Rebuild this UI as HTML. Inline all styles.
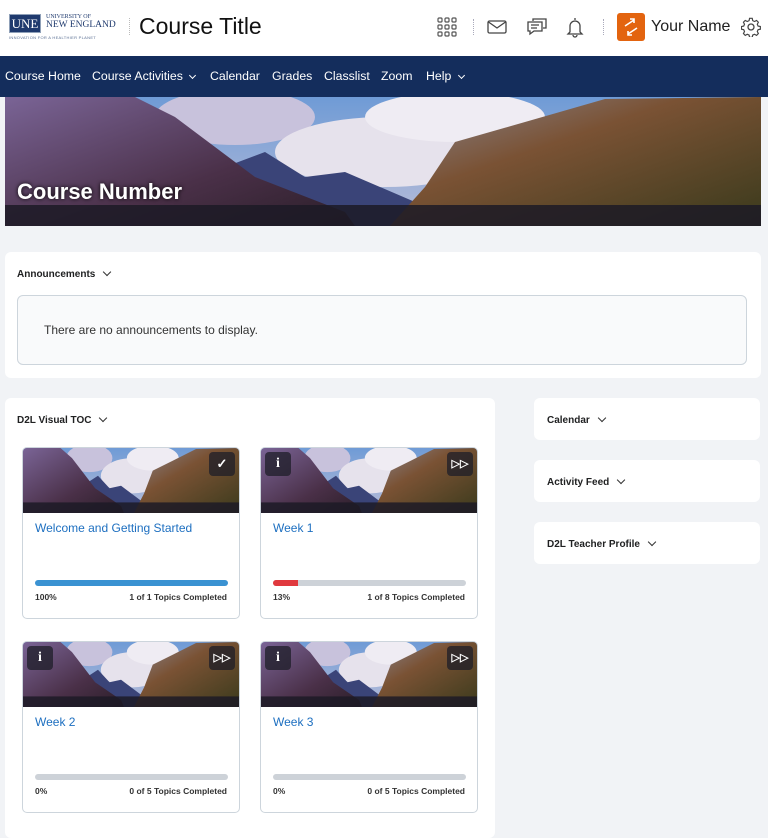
<!DOCTYPE html>
<html><head><meta charset="utf-8"><style>
*{box-sizing:border-box;margin:0;padding:0}
body{width:768px;height:823px;overflow:hidden;background:#f1f3f6;font-family:"Liberation Sans",sans-serif;position:relative}
.hdr{position:absolute;left:0;top:0;width:768px;height:56px;background:#fff}
.nav{position:absolute;left:0;top:56px;width:768px;height:41px;background:#142d5c;color:#fff;font-size:12.3px}
.nav span{position:absolute;top:13px}
.abs{position:absolute}
.w{position:absolute;background:#fff;border-radius:6px}
.wt{position:absolute;font-size:10px;font-weight:bold;color:#202122}
.chev{display:inline-block;width:6px;height:6px;border-right:1.6px solid #333;border-bottom:1.6px solid #333;transform:rotate(45deg);margin-left:9px;position:relative;top:-2px}
.card{position:absolute;width:218px;height:172px;background:#fff;border:1px solid #cdd5dc;border-radius:5px;overflow:hidden}
.card svg{position:absolute;left:0;top:0;width:218px;height:65px}
.ct{position:absolute;left:12px;top:73px;font-size:12px;color:#1d6fc0}
.bar{position:absolute;left:12px;top:132px;width:193px;height:6px;border-radius:3px;background:#cdd2d8;overflow:hidden}
.bar i{display:block;height:6px}
.pl{position:absolute;left:12px;top:144px;font-size:8.5px;font-weight:bold;color:#333}
.pr{position:absolute;right:12px;top:144px;font-size:8.5px;font-weight:bold;color:#333}
.badge{position:absolute;top:4px;width:26px;height:24px;background:rgba(30,30,40,.75);border-radius:4px;color:#fff;text-align:center;font-weight:bold;font-size:14px;line-height:24px}
</style></head><body>
<svg width="0" height="0" style="position:absolute"><defs>
<linearGradient id="sky" x1="0" y1="0" x2="0" y2="1"><stop offset="0" stop-color="#6f9bd6"/><stop offset="1" stop-color="#b9bdd8"/></linearGradient>
<linearGradient id="lm" x1="0" y1="0" x2="1" y2="1"><stop offset="0" stop-color="#7a6496"/><stop offset=".6" stop-color="#4a3048"/><stop offset="1" stop-color="#2a1e28"/></linearGradient>
<linearGradient id="rm" x1="0" y1="0" x2="1" y2="1"><stop offset="0" stop-color="#8a8894"/><stop offset=".4" stop-color="#7a5234"/><stop offset="1" stop-color="#3a3a1c"/></linearGradient>
<symbol id="land" viewBox="0 0 756 129" preserveAspectRatio="none">
<rect width="756" height="129" fill="url(#sky)"/>
<ellipse cx="230" cy="20" rx="80" ry="28" fill="#c8c2dc"/>
<ellipse cx="380" cy="55" rx="110" ry="35" fill="#e6e2ec"/>
<ellipse cx="450" cy="20" rx="90" ry="25" fill="#efecf3"/>
<polygon points="200,129 220,70 260,55 300,80 340,75 410,105 410,129" fill="#3a4478"/>
<polygon points="0,0 130,0 170,20 250,80 340,115 350,129 0,129" fill="url(#lm)"/>
<polygon points="385,129 420,90 450,45 520,25 600,2 756,0 756,129" fill="url(#rm)"/>
<rect y="108" width="756" height="21" fill="#1c1a26" opacity=".85"/>
</symbol></defs></svg>

<div class="hdr">
 <div class="abs" style="left:9px;top:14px;width:32px;height:19px;background:#1f3a6e;border:1px solid #8fa0b8;color:#fff;font-family:'Liberation Serif',serif;font-size:13px;line-height:17px;text-align:center">UNE</div>
 <div class="abs" style="left:46px;top:14px;font-family:'Liberation Serif',serif;font-size:6px;color:#1f3a6e;line-height:6px">UNIVERSITY OF</div>
 <div class="abs" style="left:46px;top:20px;font-family:'Liberation Serif',serif;font-size:9.5px;color:#1f3a6e">NEW ENGLAND</div>
 <div class="abs" style="left:9px;top:35px;font-size:4px;color:#5a6f93;letter-spacing:.3px">INNOVATION FOR A HEALTHIER PLANET</div>
 <div class="abs" style="left:129px;top:18px;height:17px;border-left:1px dotted #bbb"></div>
 <div class="abs" style="left:139px;top:13px;font-size:23px;color:#111">Course Title</div>
 <svg class="abs" style="left:437px;top:17px" width="20" height="20" viewBox="0 0 20 20" fill="none" stroke="#555" stroke-width="1.2"><rect x="1" y="1" width="4" height="4" rx="1"/><rect x="8" y="1" width="4" height="4" rx="1"/><rect x="15" y="1" width="4" height="4" rx="1"/><rect x="1" y="8" width="4" height="4" rx="1"/><rect x="8" y="8" width="4" height="4" rx="1"/><rect x="15" y="8" width="4" height="4" rx="1"/><rect x="1" y="15" width="4" height="4" rx="1"/><rect x="8" y="15" width="4" height="4" rx="1"/><rect x="15" y="15" width="4" height="4" rx="1"/></svg>
 <div class="abs" style="left:473px;top:19px;height:16px;border-left:1px dotted #aab"></div>
 <svg class="abs" style="left:487px;top:19px" width="20" height="16" viewBox="0 0 20 16" fill="none" stroke="#444" stroke-width="1.3"><rect x="1" y="2" width="18" height="12" rx="1.5"/><path d="M1.5 3l8.5 6 8.5-6"/></svg>
 <svg class="abs" style="left:526px;top:17px" width="22" height="20" viewBox="0 0 22 20" fill="none" stroke="#444" stroke-width="1.3"><path d="M7 4V2h13v9h-3"/><path d="M2 5h14v9H8l-4 3v-3H2z"/><path d="M5 8h8M5 11h6"/></svg>
 <svg class="abs" style="left:566px;top:16px" width="18" height="22" viewBox="0 0 18 22" fill="none" stroke="#444" stroke-width="1.3"><path d="M9 2v2M4 16V10a5 5 0 0110 0v6l2 2H2z"/><path d="M7 19a2 2 0 004 0"/></svg>
 <div class="abs" style="left:603px;top:19px;height:16px;border-left:1px dotted #aab"></div>
 <div class="abs" style="left:617px;top:13px;width:28px;height:28px;background:#e3640f;border-radius:3px"><svg width="28" height="28" viewBox="0 0 28 28" fill="none" stroke="#fff" stroke-width="1.6"><path d="M8 13l9-6M13 6h4v4M20 15l-9 6M15 22h-4v-4"/></svg></div>
 <div class="abs" style="left:651px;top:18px;font-size:16px;color:#222">Your Name</div>
 <svg class="abs" style="left:741px;top:17px" width="20" height="20" viewBox="0 0 20 20" fill="none" stroke="#444" stroke-width="1.3"><circle cx="10" cy="10" r="3"/><path d="M8.5 1.5h3l.5 2.5 2 1 2.3-1.2 2 2-1.2 2.3.9 2 2.5.5v3l-2.5.5-.9 2 1.2 2.3-2 2-2.3-1.2-2 .9-.5 2.5h-3l-.5-2.5-2-.9-2.3 1.2-2-2 1.2-2.3-.9-2-2.5-.5v-3l2.5-.5.9-2-1.2-2.3 2-2L6 5l2-1z" transform="scale(.9) translate(1 0)"/></svg>
</div>
<div class="nav">
 <span style="left:5px">Course Home</span>
 <span style="left:92px">Course Activities <i class="chev" style="border-color:#fff;width:5px;height:5px;margin-left:4px"></i></span>
 <span style="left:210px">Calendar</span>
 <span style="left:272px">Grades</span>
 <span style="left:324px">Classlist</span>
 <span style="left:381px">Zoom</span>
 <span style="left:426px">Help <i class="chev" style="border-color:#fff;width:5px;height:5px;margin-left:4px"></i></span>
</div>
<svg class="abs" style="left:5px;top:97px" width="756" height="129"><use href="#land"/></svg>
<div class="abs" style="left:17px;top:179px;font-size:22px;font-weight:bold;color:#fff;text-shadow:0 0 4px #000">Course Number</div>

<div class="w" style="left:5px;top:252px;width:756px;height:126px">
 <div class="wt" style="left:12px;top:17px">Announcements<i class="chev"></i></div>
 <div class="abs" style="left:12px;top:43px;width:730px;height:70px;background:#f9fafb;border:1px solid #cdd5dc;border-radius:6px;font-size:12px;color:#333;padding:27px 0 0 26px">There are no announcements to display.</div>
</div>

<div class="w" style="left:5px;top:398px;width:490px;height:440px">
 <div class="wt" style="left:12px;top:17px">D2L Visual TOC<i class="chev"></i></div>
</div>
<div class="card" style="left:22px;top:447px"><svg viewBox="0 0 218 65" preserveAspectRatio="none"><use href="#land" width="218" height="65"/></svg><div class="badge" style="right:4px;font-size:13px">✓</div><div class="ct">Welcome and Getting Started</div><div class="bar"><i style="width:100%;background:#3a92d2"></i></div><div class="pl">100%</div><div class="pr">1 of 1 Topics Completed</div></div>
<div class="card" style="left:260px;top:447px"><svg viewBox="0 0 218 65" preserveAspectRatio="none"><use href="#land" width="218" height="65"/></svg><div class="badge" style="left:4px;font-family:'Liberation Serif',serif">i</div><div class="badge" style="right:4px;font-size:11px">▷▷</div><div class="ct">Week 1</div><div class="bar"><i style="width:13%;background:#e0393e"></i></div><div class="pl">13%</div><div class="pr">1 of 8 Topics Completed</div></div>
<div class="card" style="left:22px;top:641px"><svg viewBox="0 0 218 65" preserveAspectRatio="none"><use href="#land" width="218" height="65"/></svg><div class="badge" style="left:4px;font-family:'Liberation Serif',serif">i</div><div class="badge" style="right:4px;font-size:11px">▷▷</div><div class="ct">Week 2</div><div class="bar"></div><div class="pl">0%</div><div class="pr">0 of 5 Topics Completed</div></div>
<div class="card" style="left:260px;top:641px"><svg viewBox="0 0 218 65" preserveAspectRatio="none"><use href="#land" width="218" height="65"/></svg><div class="badge" style="left:4px;font-family:'Liberation Serif',serif">i</div><div class="badge" style="right:4px;font-size:11px">▷▷</div><div class="ct">Week 3</div><div class="bar"></div><div class="pl">0%</div><div class="pr">0 of 5 Topics Completed</div></div>

<div class="w" style="left:534px;top:398px;width:226px;height:42px"><div class="wt" style="left:13px;top:17px">Calendar<i class="chev"></i></div></div>
<div class="w" style="left:534px;top:460px;width:226px;height:42px"><div class="wt" style="left:13px;top:17px">Activity Feed<i class="chev"></i></div></div>
<div class="w" style="left:534px;top:522px;width:226px;height:42px"><div class="wt" style="left:13px;top:17px">D2L Teacher Profile<i class="chev"></i></div></div>
</body></html>
